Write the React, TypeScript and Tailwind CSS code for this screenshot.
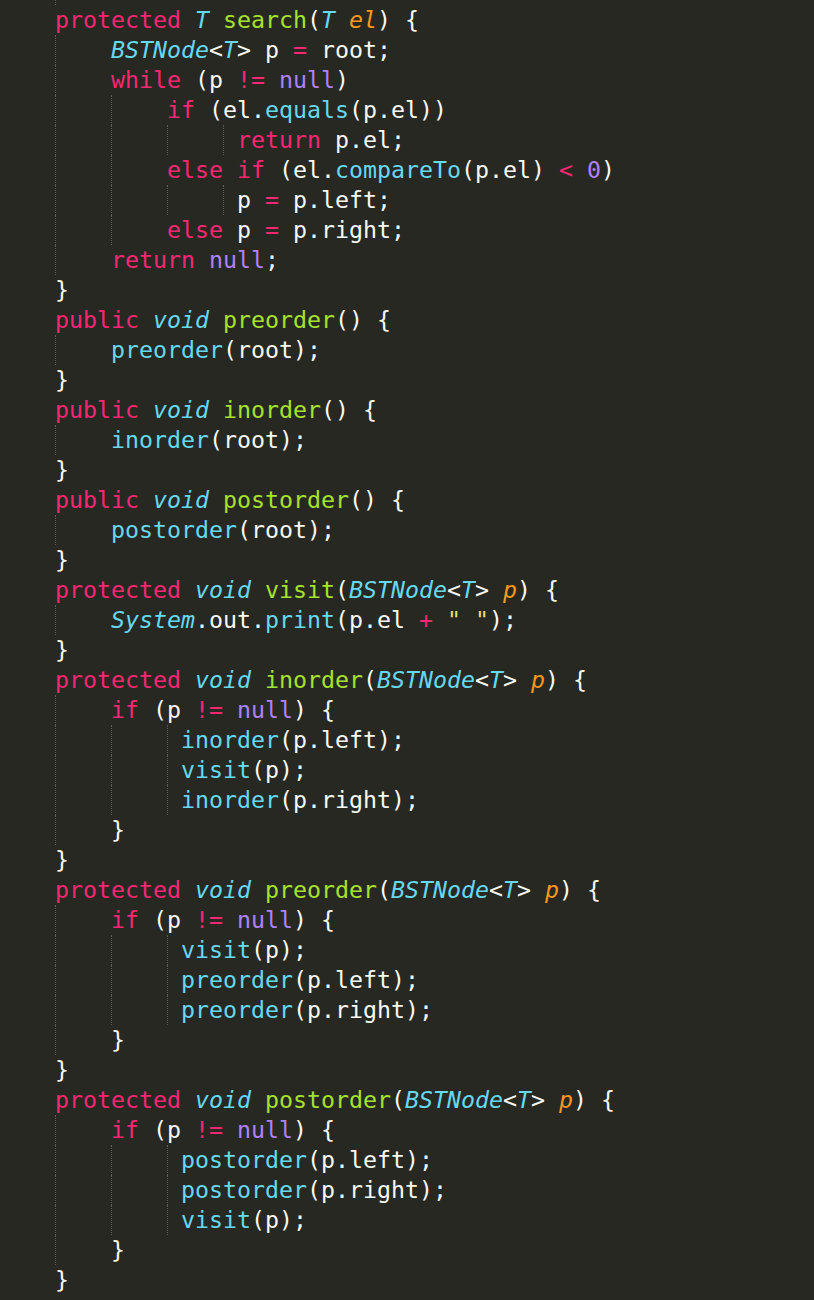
type Part = [string, string];

const k = (s: string): Part => ["text-[#f92672]", s];
const t = (s: string): Part => ["text-[#66d9ef] italic", s];
const f = (s: string): Part => ["text-[#a6e22e]", s];
const c = (s: string): Part => ["text-[#66d9ef]", s];
const a = (s: string): Part => ["text-[#fd971f] italic", s];
const n = (s: string): Part => ["text-[#ae81ff]", s];
const q = (s: string): Part => ["text-[#e6db74]", s];
const w = (s: string): Part => ["", s];

type Line = { ind: number; parts: Part[] };

const L = (ind: number, ...parts: Part[]): Line => ({ ind, parts });

const traversal = (name: string, body: Line[]): Line[] => [
  L(0, k("protected"), w(" "), t("void"), w(" "), f(name), w("("), t("BSTNode"), w("<"), t("T"), w("> "), a("p"), w(") {")),
  L(4, k("if"), w(" (p "), k("!="), w(" "), n("null"), w(") {")),
  ...body,
  L(4, w("}")),
  L(0, w("}")),
];

const lines: Line[] = [
  L(4),
  L(0, k("protected"), w(" "), t("T"), w(" "), f("search"), w("("), t("T"), w(" "), a("el"), w(") {")),
  L(4, t("BSTNode"), w("<"), t("T"), w("> p "), k("="), w(" root;")),
  L(4, k("while"), w(" (p "), k("!="), w(" "), n("null"), w(")")),
  L(8, k("if"), w(" (el."), c("equals"), w("(p.el))")),
  L(13, k("return"), w(" p.el;")),
  L(8, k("else if"), w(" (el."), c("compareTo"), w("(p.el) "), k("<"), w(" "), n("0"), w(")")),
  L(13, w("p "), k("="), w(" p.left;")),
  L(8, k("else"), w(" p "), k("="), w(" p.right;")),
  L(4, k("return"), w(" "), n("null"), w(";")),
  L(0, w("}")),
  L(0, k("public"), w(" "), t("void"), w(" "), f("preorder"), w("() {")),
  L(4, c("preorder"), w("(root);")),
  L(0, w("}")),
  L(0, k("public"), w(" "), t("void"), w(" "), f("inorder"), w("() {")),
  L(4, c("inorder"), w("(root);")),
  L(0, w("}")),
  L(0, k("public"), w(" "), t("void"), w(" "), f("postorder"), w("() {")),
  L(4, c("postorder"), w("(root);")),
  L(0, w("}")),
  L(0, k("protected"), w(" "), t("void"), w(" "), f("visit"), w("("), t("BSTNode"), w("<"), t("T"), w("> "), a("p"), w(") {")),
  L(4, t("System"), w(".out."), c("print"), w("(p.el "), k("+"), w(" "), q('" "'), w(");")),
  L(0, w("}")),
  ...traversal("inorder", [
    L(9, c("inorder"), w("(p.left);")),
    L(9, c("visit"), w("(p);")),
    L(9, c("inorder"), w("(p.right);")),
  ]),
  ...traversal("preorder", [
    L(9, c("visit"), w("(p);")),
    L(9, c("preorder"), w("(p.left);")),
    L(9, c("preorder"), w("(p.right);")),
  ]),
  ...traversal("postorder", [
    L(9, c("postorder"), w("(p.left);")),
    L(9, c("postorder"), w("(p.right);")),
    L(9, c("visit"), w("(p);")),
  ]),
  L(0, k("public"), w(" "), t("void"), w(" "), f("deleteByMerging"), w("("), t("T"), w(" "), a("el"), w(") {")),
];

function Indent({ ind }: { ind: number }) {
  const cols: number[] = [];
  for (let g = 0; g < ind; g += 4) cols.push(Math.min(4, ind - g));
  return (
    <>
      {cols.map((size, i) => (
        <span
          key={i}
          className={
            size === 4
              ? "inline-block h-[30px] w-[4ch] border-l border-dotted border-[#5c5c55] align-top"
              : "inline-block h-[30px] w-[1ch] border-l border-dotted border-[#5c5c55] align-top"
          }
        />
      ))}
    </>
  );
}

export default function App() {
  return (
    <main className="h-screen overflow-hidden bg-[#272822] text-[#f8f8f2]">
      <div className="-mt-[25px] pl-[55px] font-['DejaVu_Sans_Mono',monospace] text-[23.25px] leading-[30px] whitespace-pre">
        {lines.map((line, i) => (
          <div key={i} className="h-[30px]">
            <Indent ind={line.ind} />
            {line.parts.map(([cls, text], j) => (
              <span key={j} className={cls}>
                {text}
              </span>
            ))}
          </div>
        ))}
      </div>
    </main>
  );
}
